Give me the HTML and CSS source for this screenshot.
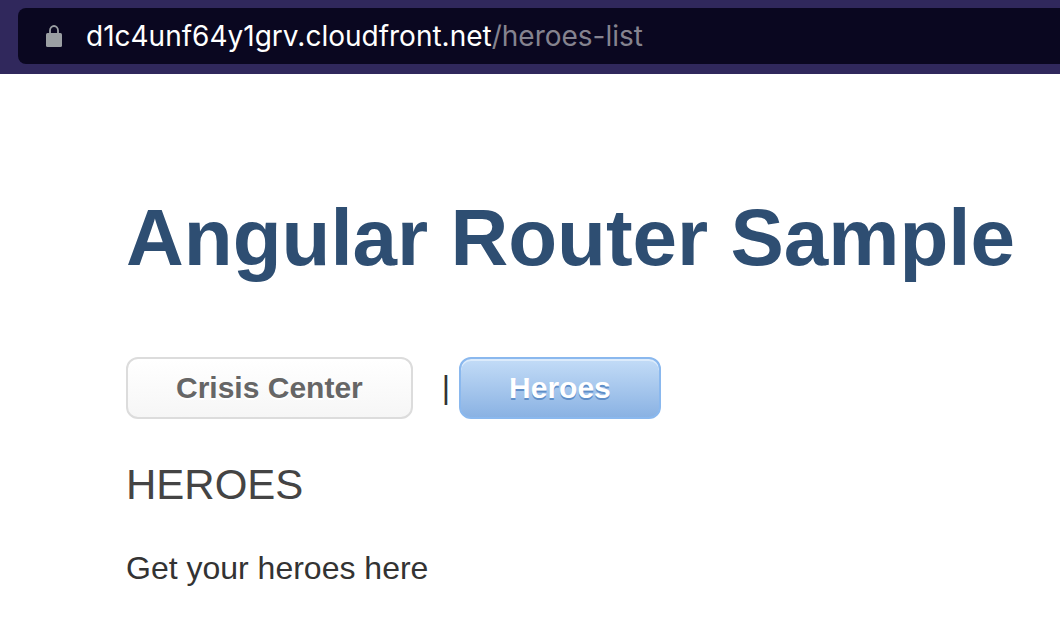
FILE: index.html
```html
<!DOCTYPE html>
<html lang="en">
<head>
<meta charset="utf-8">
<title>Angular Router Sample</title>
<link rel="stylesheet" href="styles.css">
</head>
<body>
<header class="toolbar">
  <div class="address">
    <svg class="lock" width="18" height="22" viewBox="0 0 18 22" aria-hidden="true"><path d="M5 9V5.500a4 4.500 0 0 1 8 0V9" fill="none" stroke="#9b9fa3" stroke-width="1.800"/><rect x="1" y="8" width="16" height="14" rx="1.500" fill="#9b9fa3"/></svg>
    <span class="url">d1c4unf64y1grv.cloudfront.net<span class="path">/heroes-list</span></span>
  </div>
</header>
<main class="page">
  <h1 class="title">Angular Router Sample</h1>
  <nav class="nav">
    <a class="button" href="#crisis">Crisis Center</a>
    <span class="divider">|</span>
    <a class="button active" href="#heroes">Heroes</a>
  </nav>
  <h2 class="heading">HEROES</h2>
  <p class="text">Get your heroes here</p>
</main>
</body>
</html>
```
FILE: styles.css
```css
body {
  margin: 0;
  background: #fff;
  font-family: "Liberation Sans", Arial, sans-serif;
}
.toolbar {
  padding: 8px 0 10px 18px;
  background: #30285c;
}
.address {
  display: flex;
  align-items: center;
  gap: 23px;
  height: 56px;
  padding-left: 27px;
  border-radius: 8px 0 0 8px;
  background: #0a0720;
}
.url {
  font: 28px/36px Inter, sans-serif;
  color: #fff;
  white-space: nowrap;
}
.path {
  color: #85838f;
}
.page {
  padding: 116px 40px 40px 126px;
}
.title {
  margin: 0;
  font-size: 80px;
  line-height: 96px;
  color: #2e4e72;
  white-space: nowrap;
}
.nav {
  display: flex;
  align-items: center;
  margin-top: 71px;
}
.button {
  box-sizing: border-box;
  height: 62px;
  padding: 0 48px;
  border: 2px solid #dcdcdc;
  border-radius: 12px;
  background: linear-gradient(#fff, #f6f6f6);
  box-shadow: inset 0 2px 0 #fff;
  color: #666;
  font-size: 30px;
  font-weight: bold;
  line-height: 58px;
  text-decoration: none;
  text-shadow: 0 2px 0 #fff;
}
.active {
  border-color: #8ab8ee;
  background: linear-gradient(#c3dcf7, #8ab2e3);
  box-shadow: inset 0 2px 0 #dcebfb;
  color: #fff;
  text-shadow: 0 2px 0 #5f8ec8;
}
.divider {
  padding: 0 9px 2px 29px;
  color: #333;
  font-size: 32px;
}
.heading {
  margin: 40px 0 0;
  font-size: 42px;
  font-weight: normal;
  line-height: 52px;
  color: #444;
}
.text {
  margin: 37px 0 0;
  font-size: 32px;
  line-height: 40px;
  color: #333;
}
```
